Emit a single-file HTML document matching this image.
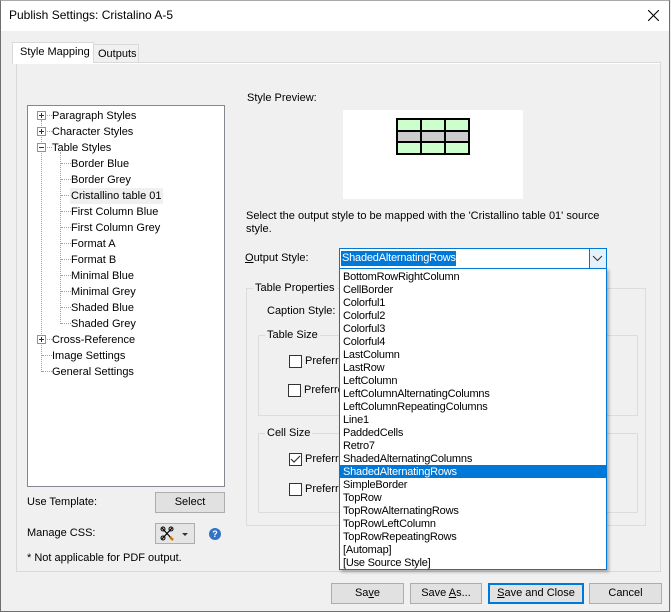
<!DOCTYPE html>
<html><head><meta charset="utf-8"><style>
*{box-sizing:border-box;margin:0;padding:0}
body{width:671px;height:612px;background:#f0f0f0;font-family:"Liberation Sans",sans-serif;font-size:11px;color:#000;position:relative;overflow:hidden}
.a{position:absolute}
.win{left:0;top:0;width:670px;height:612px;border:1px solid #6e6e6e;border-top:1px solid #aaa}
.title{left:1px;top:1px;width:668px;height:30px;background:#fff}
.t{white-space:nowrap}
.btn{background:#e1e1e1;border:1px solid #adadad;text-align:center;line-height:19px}
.grp{border:1px solid #dcdcdc}
.lbl{background:#f0f0f0;padding:0 2px}
.cb{width:13px;height:13px;border:1px solid #333;background:#fff}
.tree div{position:absolute;white-space:nowrap;line-height:14px}
.dot{position:absolute;border-left:1px dotted #a0a0a0}
.hd{position:absolute;border-top:1px dotted #a0a0a0;height:0}
.pm{position:absolute;width:9px;height:9px;border:1px solid #919191;background:#fff}
.pm:before{content:"";position:absolute;left:1px;top:3px;width:5px;height:1px;background:#333}
.pm.p:after{content:"";position:absolute;left:3px;top:1px;width:1px;height:5px;background:#333}
.list div{height:13px;line-height:14px;padding-left:3px;white-space:nowrap;letter-spacing:-0.2px}
</style></head><body>
<div class="a win"></div>
<div class="a title"></div>
<div class="a t" style="left:9px;top:8px;font-size:12px">Publish Settings: Cristalino A-5</div>
<svg class="a" style="left:648px;top:10px" width="11" height="11"><path d="M0 0L11 11M11 0L0 11" stroke="#000" stroke-width="1.1"/></svg>

<div class="a" style="left:16px;top:62px;width:645px;height:510px;border:1px solid #d9d9d9;background:#f0f0f0"></div>
<div class="a" style="left:93px;top:44px;width:46px;height:19px;border:1px solid #d9d9d9;background:#f0f0f0"></div>
<div class="a t" style="left:98px;top:48px">Outputs</div>
<div class="a" style="left:12px;top:42px;width:82px;height:22px;border:1px solid #d9d9d9;border-bottom:none;background:#fff"></div>
<div class="a t" style="left:20px;top:46px">Style Mapping</div>
<div class="a" style="left:17px;top:63px;width:643px;height:508px;background:#f0f0f0;border-top:1px solid #fff"></div>

<div class="a tree" style="left:27px;top:105px;width:198px;height:382px;border:1px solid #828790;background:#fff">
<div class="dot" style="left:13px;top:14px;height:252px"></div>
<div class="dot" style="left:32px;top:46px;height:172px"></div>
<div class="hd" style="left:19px;top:9px;width:5px"></div>
<div class="hd" style="left:19px;top:25px;width:5px"></div>
<div class="hd" style="left:19px;top:41px;width:5px"></div>
<div class="hd" style="left:33px;top:57px;width:10px"></div>
<div class="hd" style="left:33px;top:73px;width:10px"></div>
<div class="hd" style="left:33px;top:89px;width:10px"></div>
<div class="hd" style="left:33px;top:105px;width:10px"></div>
<div class="hd" style="left:33px;top:121px;width:10px"></div>
<div class="hd" style="left:33px;top:137px;width:10px"></div>
<div class="hd" style="left:33px;top:153px;width:10px"></div>
<div class="hd" style="left:33px;top:169px;width:10px"></div>
<div class="hd" style="left:33px;top:185px;width:10px"></div>
<div class="hd" style="left:33px;top:201px;width:10px"></div>
<div class="hd" style="left:33px;top:217px;width:10px"></div>
<div class="hd" style="left:19px;top:233px;width:5px"></div>
<div class="hd" style="left:14px;top:249px;width:10px"></div>
<div class="hd" style="left:14px;top:265px;width:10px"></div>
<div class="pm p" style="left:9px;top:5px"></div>
<div class="pm p" style="left:9px;top:21px"></div>
<div class="pm" style="left:9px;top:37px"></div>
<div class="pm p" style="left:9px;top:229px"></div>
<div style="left:24px;top:3px">Paragraph Styles</div>
<div style="left:24px;top:19px">Character Styles</div>
<div style="left:24px;top:35px">Table Styles</div>
<div style="left:43px;top:51px">Border Blue</div>
<div style="left:43px;top:67px">Border Grey</div>
<div style="left:42px;top:82px;background:#f0f0f0;padding:1px 1px;line-height:14px">Cristallino table 01</div>
<div style="left:43px;top:99px">First Column Blue</div>
<div style="left:43px;top:115px">First Column Grey</div>
<div style="left:43px;top:131px">Format A</div>
<div style="left:43px;top:147px">Format B</div>
<div style="left:43px;top:163px">Minimal Blue</div>
<div style="left:43px;top:179px">Minimal Grey</div>
<div style="left:43px;top:195px">Shaded Blue</div>
<div style="left:43px;top:211px">Shaded Grey</div>
<div style="left:24px;top:227px">Cross-Reference</div>
<div style="left:24px;top:243px">Image Settings</div>
<div style="left:24px;top:259px">General Settings</div>
</div>

<div class="a t" style="left:27px;top:496px">Use Template:</div>
<div class="a btn" style="left:155px;top:492px;width:70px;height:21px">Select</div>
<div class="a t" style="left:27px;top:527px">Manage CSS:</div>
<div class="a btn" style="left:155px;top:523px;width:40px;height:21px;background:#e5e5e5"></div>
<svg class="a" style="left:160px;top:526px" width="32" height="16"><path d="M2 2L12 13M12 2L2 13" stroke="#000" stroke-width="1.2"/><circle cx="3" cy="3" r="2" fill="none" stroke="#000"/><circle cx="11" cy="3" r="2" fill="none" stroke="#000"/><circle cx="3" cy="12" r="2" fill="none" stroke="#000"/><path d="M10 11L13 14" stroke="#d07000" stroke-width="2.5"/><path d="M22 7h6l-3 3z" fill="#333"/></svg>
<div class="a" style="left:209px;top:528px;width:12px;height:12px;border-radius:50%;background:#2f74c8;color:#fff;font-size:9px;font-weight:bold;text-align:center;line-height:12px">?</div>
<div class="a t" style="left:27px;top:552px">* Not applicable for PDF output.</div>

<div class="a t" style="left:247px;top:92px">Style Preview:</div>
<div class="a" style="left:343px;top:110px;width:180px;height:89px;background:#fff"></div>
<svg class="a" style="left:396px;top:118px" width="74" height="37"><rect x="1" y="1" width="72" height="35" fill="#ccffcc" stroke="#000" stroke-width="2"/><rect x="1" y="13" width="72" height="11" fill="#cccccc" stroke="#000" stroke-width="2"/><path d="M25 1V36M49 1V36" stroke="#000" stroke-width="2"/></svg>
<div class="a" style="left:246px;top:210px;width:360px;line-height:13px">Select the output style to be mapped with the 'Cristallino table 01' source style.</div>
<div class="a t" style="left:245px;top:252px"><u>O</u>utput Style:</div>

<div class="a grp" style="left:246px;top:288px;width:400px;height:238px"></div>
<div class="a t lbl" style="left:253px;top:282px">Table Properties</div>
<div class="a t" style="left:267px;top:305px">Caption Style:</div>
<div class="a grp" style="left:258px;top:335px;width:380px;height:81px"></div>
<div class="a t lbl" style="left:265px;top:329px">Table Size</div>
<div class="a cb" style="left:289px;top:355px"></div><div class="a t" style="left:305px;top:355px">Preferred</div>
<div class="a cb" style="left:288px;top:384px"></div><div class="a t" style="left:304px;top:384px">Preferred</div>
<div class="a grp" style="left:258px;top:433px;width:380px;height:80px"></div>
<div class="a t lbl" style="left:265px;top:427px">Cell Size</div>
<div class="a cb" style="left:289px;top:453px"></div>
<svg class="a" style="left:290px;top:454px" width="11" height="11"><path d="M1 5L4 8L10 2" stroke="#333" fill="none" stroke-width="1.2"/></svg>
<div class="a t" style="left:305px;top:453px">Preferred</div>
<div class="a cb" style="left:289px;top:483px"></div><div class="a t" style="left:305px;top:483px">Preferred</div>

<div class="a" style="left:339px;top:248px;width:268px;height:21px;border:1px solid #0078d7;background:#fff"></div>
<div class="a t" style="left:341px;top:251px;width:115px;height:15px;background:#0078d7;color:#fff;line-height:15px;padding-left:1px;letter-spacing:-0.2px">ShadedAlternatingRows</div>
<div class="a" style="left:589px;top:249px;width:17px;height:19px;background:#e5f1fb;border-left:1px solid #0078d7"></div>
<svg class="a" style="left:592px;top:255px" width="11" height="7"><path d="M1 1L5.5 5.5L10 1" stroke="#333" fill="none"/></svg>
<div class="a list" style="left:339px;top:268px;width:268px;height:302px;border:1px solid #0078d7;background:#fff;padding-top:1px;box-shadow:2px 2px 3px rgba(0,0,0,.3)">
<div>BottomRowRightColumn</div><div>CellBorder</div><div>Colorful1</div><div>Colorful2</div><div>Colorful3</div><div>Colorful4</div><div>LastColumn</div><div>LastRow</div><div>LeftColumn</div><div>LeftColumnAlternatingColumns</div><div>LeftColumnRepeatingColumns</div><div>Line1</div><div>PaddedCells</div><div>Retro7</div><div>ShadedAlternatingColumns</div><div style="background:#0078d7;color:#fff">ShadedAlternatingRows</div><div>SimpleBorder</div><div>TopRow</div><div>TopRowAlternatingRows</div><div>TopRowLeftColumn</div><div>TopRowRepeatingRows</div><div>[Automap]</div><div>[Use Source Style]</div>
</div>

<div class="a btn" style="left:331px;top:583px;width:73px;height:21px">Sa<u>v</u>e</div>
<div class="a btn" style="left:410px;top:583px;width:72px;height:21px">Save <u>A</u>s...</div>
<div class="a btn" style="left:488px;top:583px;width:96px;height:21px;border:2px solid #0078d7;line-height:17px"><u>S</u>ave and Close</div>
<div class="a btn" style="left:589px;top:583px;width:73px;height:21px">Cancel</div>
</body></html>
